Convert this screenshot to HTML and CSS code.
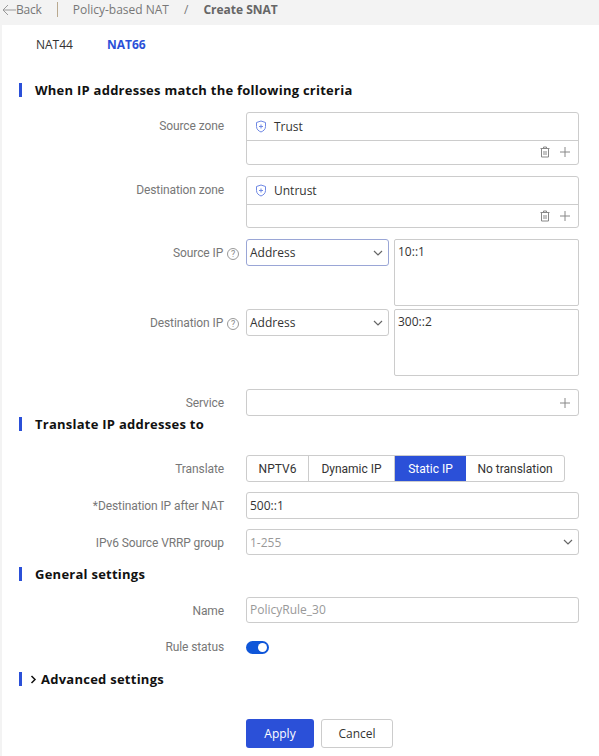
FILE: index.html
```html
<!DOCTYPE html>
<html lang="en">

<head>
    <meta charset="UTF-8">
    <title>Create SNAT</title>
    <link rel="stylesheet" href="styles.css">
</head>

<body>
    <header class="topbar">
        <a class="back">
            <svg width="14" height="12" viewBox="0 0 14 12"><path d="M14 6H1M6 1 1 6l5 5" fill="none" stroke="#999" stroke-width="1"/></svg>Back</a>
        <span class="bar"></span>
        <span class="crumb">Policy-based NAT</span>
        <span class="slash">/</span>
        <span class="crumb-now">Create SNAT</span>
    </header>

    <main class="page">
        <nav class="tabs">
            <a>NAT44</a>
            <a class="active">NAT66</a>
        </nav>

        <h2 class="section first">When IP addresses match the following criteria</h2>

        <div class="row zone-row">
            <label>Source zone</label>
            <div class="zone-box">
                <div class="zone-item">
                    <svg class="shield" width="12" height="13" viewBox="0 0 12 13"><path d="M6 1 10.500 2.500V6.500C10.500 9.300 8.500 11 6 12 3.500 11 1.500 9.300 1.500 6.500V2.500Z" fill="none" stroke="#6f88e4"/><path d="M6 4.500v4M4 6.500h4" stroke="#6f88e4"/></svg>
                    Trust
                </div>
                <div class="zone-tools">
                    <svg width="12" height="12" viewBox="0 0 12 12"><path d="M1.500 2.500h9M4.500 2.500V1h3v1.500M2.500 2.500V11h7V2.500M5 5v4M7 5v4" fill="none" stroke="#888"/></svg>
                    <svg width="12" height="12" viewBox="0 0 12 12"><path d="M6 1v10M1 6h10" stroke="#888"/></svg>
                </div>
            </div>
        </div>

        <div class="row zone-row">
            <label>Destination zone</label>
            <div class="zone-box">
                <div class="zone-item">
                    <svg class="shield" width="12" height="13" viewBox="0 0 12 13"><path d="M6 1 10.500 2.500V6.500C10.500 9.300 8.500 11 6 12 3.500 11 1.500 9.300 1.500 6.500V2.500Z" fill="none" stroke="#6f88e4"/><path d="M6 4.500v4M4 6.500h4" stroke="#6f88e4"/></svg>
                    Untrust
                </div>
                <div class="zone-tools">
                    <svg width="12" height="12" viewBox="0 0 12 12"><path d="M1.500 2.500h9M4.500 2.500V1h3v1.500M2.500 2.500V11h7V2.500M5 5v4M7 5v4" fill="none" stroke="#888"/></svg>
                    <svg width="12" height="12" viewBox="0 0 12 12"><path d="M6 1v10M1 6h10" stroke="#888"/></svg>
                </div>
            </div>
        </div>

        <div class="row ip-row">
            <label>Source IP <span class="help">?</span></label>
            <div class="select select-small focus">Address
                <svg width="10" height="6" viewBox="0 0 10 6"><path d="M1 1l4 4 4-4" fill="none" stroke="#666" stroke-width="1.200"/></svg>
            </div>
            <div class="ip-box">10::1</div>
        </div>

        <div class="row ip-row dest">
            <label>Destination IP <span class="help">?</span></label>
            <div class="select select-small">Address
                <svg width="10" height="6" viewBox="0 0 10 6"><path d="M1 1l4 4 4-4" fill="none" stroke="#666" stroke-width="1.200"/></svg>
            </div>
            <div class="ip-box">300::2</div>
        </div>

        <div class="row service-row">
            <label>Service</label>
            <div class="field service">
                <svg width="12" height="12" viewBox="0 0 12 12"><path d="M6 1v10M1 6h10" stroke="#888"/></svg>
            </div>
        </div>

        <h2 class="section translate">Translate IP addresses to</h2>

        <div class="row translate-row">
            <label>Translate</label>
            <div class="segments">
                <a>NPTV6</a>
                <a>Dynamic IP</a>
                <a class="on">Static IP</a>
                <a>No translation</a>
            </div>
        </div>

        <div class="row after-row">
            <label>*Destination IP after NAT</label>
            <div class="field">500::1</div>
        </div>

        <div class="row vrrp-row">
            <label>IPv6 Source VRRP group</label>
            <div class="select muted">1-255
                <svg width="10" height="6" viewBox="0 0 10 6"><path d="M1 1l4 4 4-4" fill="none" stroke="#666" stroke-width="1.200"/></svg>
            </div>
        </div>

        <h2 class="section general">General settings</h2>

        <div class="row name-row">
            <label>Name</label>
            <div class="field muted">PolicyRule_30</div>
        </div>

        <div class="row status-row">
            <label>Rule status</label>
            <span class="switch"></span>
        </div>

        <h2 class="section advanced">
            <svg width="7" height="9" viewBox="0 0 7 9"><path d="M1.500 1 5 4.500 1.500 8" fill="none" stroke="#111" stroke-width="1.500"/></svg>
            Advanced settings
        </h2>

        <div class="actions">
            <button class="apply">Apply</button>
            <button class="cancel">Cancel</button>
        </div>
    </main>
</body>

</html>
```

FILE: styles.css
```css
* {
    box-sizing: border-box;
}

body {
    margin: 0;
    padding: 0;
    height: 756px;
    overflow: hidden;
    background-color: #f3f3f3;
    color: #333;
    font-family: "Open Sans", "Noto Sans", sans-serif;
    font-size: 12px;
}

.topbar {
    height: 25px;
    display: flex;
    align-items: center;
    padding-left: 2px;
    padding-bottom: 6px;
    color: #777;
}

.back {
    display: flex;
    align-items: center;
    letter-spacing: -0.2px;
}

.bar {
    width: 1px;
    height: 15px;
    margin: 0 15px 0 15px;
    background-color: #b9a98f;
}

.slash {
    margin: 0 15px;
}

.crumb-now {
    font-weight: 700;
    color: #666;
}

.page {
    margin-left: 2px;
    height: 731px;
    background-color: #fff;
    padding-top: 11px;
}

.tabs {
    display: flex;
    gap: 34px;
    padding-left: 34px;
    line-height: 17px;
}

.tabs .active {
    color: #2b50d8;
    font-weight: 700;
}

.section {
    margin: 0;
    height: 14px;
    line-height: 14px;
    margin-left: 17px;
    padding-left: 13px;
    border-left: 3px solid #2b50d8;
    font-size: 13px;
    font-weight: 700;
    color: #111;
    letter-spacing: 0.25px;
}

.section.first {
    margin-top: 30px;
}

.section.translate {
    margin-top: 1px;
}

.section.general {
    margin-top: 12px;
}

.section.advanced {
    margin-top: 17px;
    display: flex;
    align-items: center;
    gap: 4px;
    padding-left: 8px;
}

.row {
    display: flex;
    align-items: flex-start;
    color: #777;
}

.row label {
    width: 222px;
    height: 20px;
    flex-shrink: 0;
    margin-right: 22px;
    padding-top: 1px;
    text-align: right;
    font-family: Roboto, sans-serif;
    letter-spacing: -0.1px;
}

.zone-row {
    margin-bottom: 11px;
}

.section.first + .zone-row {
    margin-top: 15px;
}

.zone-row label {
    line-height: 26px;
}

.zone-box {
    width: 333px;
    height: 53px;
    border: 1px solid #ccc;
    border-radius: 3px;
}

.zone-row + .zone-row .zone-box {
    height: 52px;
}

.zone-item {
    height: 28px;
    display: flex;
    align-items: center;
    gap: 7px;
    padding-left: 8px;
    padding-bottom: 1px;
    border-bottom: 1px solid #ccc;
    color: #333;
}

.zone-tools {
    height: 22px;
    display: flex;
    align-items: center;
    justify-content: flex-end;
    gap: 8px;
    padding-right: 7px;
    padding-bottom: 1px;
}

.ip-row {
    height: 67px;
    margin-bottom: 3px;
}

.ip-row label {
    line-height: 27px;
}

.help {
    display: inline-block;
    width: 12px;
    height: 12px;
    margin-left: 1px;
    margin-right: -15px;
    border: 1px solid #999;
    border-radius: 50%;
    font-size: 9px;
    line-height: 10px;
    text-align: center;
    color: #888;
}

.select {
    height: 27px;
    width: 333px;
    display: flex;
    align-items: center;
    justify-content: space-between;
    padding: 0 5px 0 3px;
    border: 1px solid #ccc;
    border-radius: 3px;
    color: #333;
}

.select-small {
    width: 143px;
}

.select.focus {
    border-color: #9aa6d6;
}

.select.muted {
    color: #999;
}

.ip-box {
    width: 185px;
    height: 67px;
    margin-left: 5px;
    padding: 0 3px;
    border: 1px solid #ccc;
    border-radius: 2px;
    line-height: 24px;
    color: #333;
}

.service-row {
    margin-top: 13px;
}

.service-row label {
    line-height: 27px;
}

.field {
    width: 333px;
    height: 27px;
    line-height: 25px;
    padding: 0 3px;
    border: 1px solid #ccc;
    border-radius: 3px;
    color: #333;
}

.field.muted {
    color: #999;
}

.service {
    display: flex;
    align-items: center;
    justify-content: flex-end;
    padding-right: 7px;
}

.translate-row {
    margin-top: 24px;
}

.translate-row label,
.after-row label {
    line-height: 27px;
}

.vrrp-row label,
.name-row label {
    line-height: 26px;
}

.segments {
    display: flex;
    width: 319px;
    height: 27px;
    border: 1px solid #ccc;
    border-radius: 3px;
    color: #333;
    font-family: Roboto, sans-serif;
}

.segments a {
    line-height: 26px;
    text-align: center;
    border-right: 1px solid #ccc;
}

.segments a:nth-child(1) {
    width: 62px;
}

.segments a:nth-child(2) {
    width: 86px;
}

.segments a:nth-child(3) {
    width: 71px;
    border-right: none;
    background-color: #2b50d8;
    color: #fff;
}

.segments a:nth-child(4) {
    flex: 1;
    border-right: none;
}

.after-row {
    margin-top: 10px;
}

.vrrp-row {
    margin-top: 10px;
}

.vrrp-row .select {
    height: 26px;
}

.name-row {
    margin-top: 16px;
}

.name-row .field {
    height: 26px;
    line-height: 24px;
}

.status-row {
    margin-top: 16px;
    align-items: center;
    height: 16px;
}

.status-row label {
    height: 16px;
    padding-top: 0;
    line-height: 16px;
}

.switch {
    position: relative;
    display: block;
    width: 23px;
    height: 13px;
    border-radius: 7px;
    background-color: #0f56d9;
}

.switch::after {
    content: "";
    position: absolute;
    top: 2px;
    right: 2px;
    width: 9px;
    height: 9px;
    border-radius: 50%;
    background-color: #fff;
}

.actions {
    display: flex;
    gap: 7px;
    margin-top: 33px;
    padding-left: 244px;
}

.actions button {
    height: 29px;
    border-radius: 3px;
    font-family: inherit;
    font-size: 12px;
}

.apply {
    width: 68px;
    border: none;
    background-color: #2b50d8;
    color: #fff;
}

.cancel {
    width: 72px;
    border: 1px solid #ccc;
    background-color: #fff;
    color: #333;
}
```
